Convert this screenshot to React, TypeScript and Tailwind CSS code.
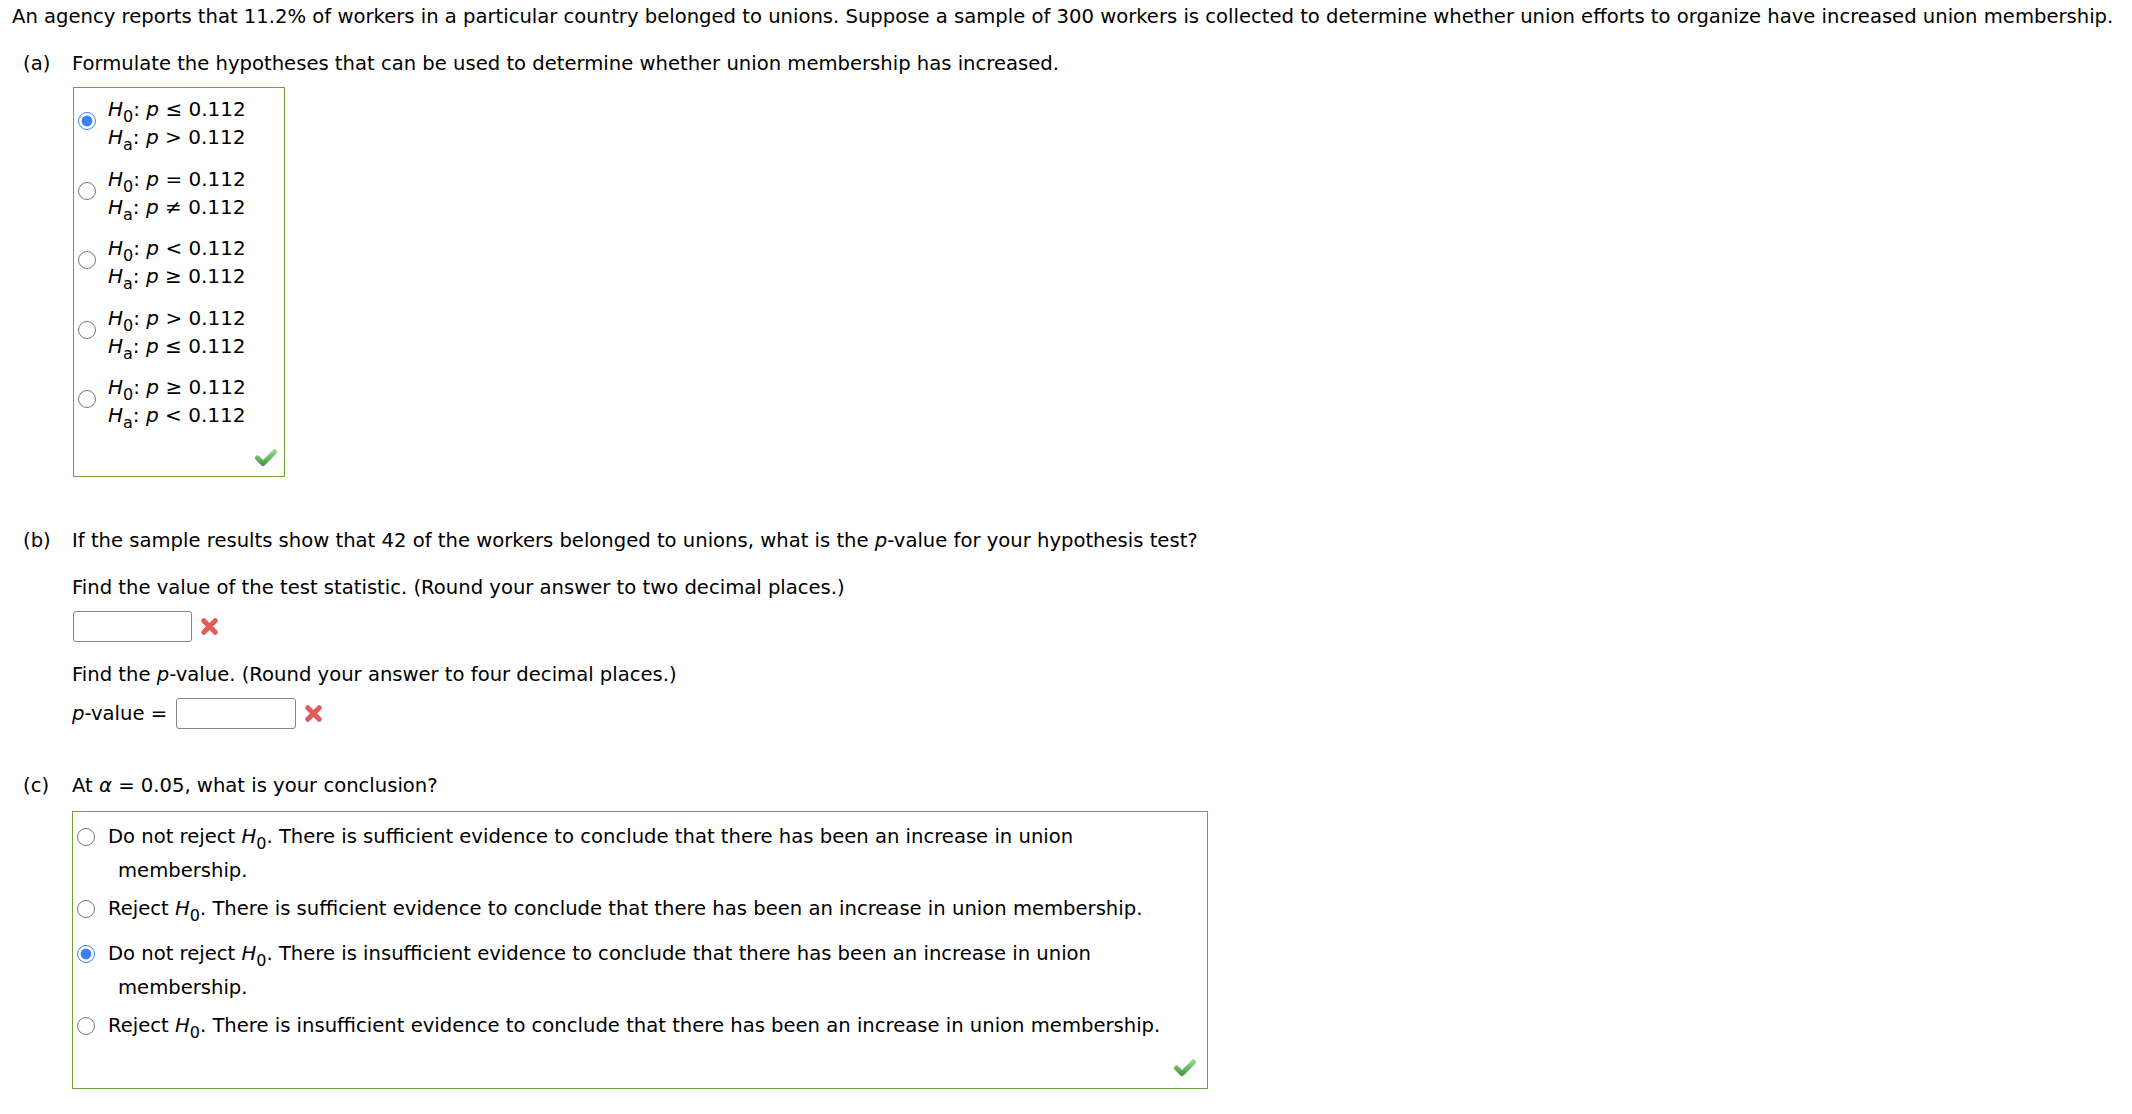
import React from 'react';

function Sub({ c }: { c: string }) {
    return <span className="not-italic text-[16px] leading-[0] relative top-[6px]">{c}</span>;
}

function H({ s }: { s: string }) {
    return (
        <>
            <i>H</i>
            <Sub c={s} />
        </>
    );
}

function Radio({ checked = false }: { checked?: boolean }) {
    return (
        <input
            type="radio"
            defaultChecked={checked}
            className="w-[18px] h-[18px] m-0 shrink-0 accent-[#3d80f4]"
        />
    );
}

function Check({ id }: { id: string }) {
    return (
        <svg width="24" height="19" viewBox="0 0 24 19">
            <defs>
                <linearGradient id={id} x1="0" y1="0" x2="0" y2="1">
                    <stop offset="0" stopColor="#8fd38a" />
                    <stop offset="1" stopColor="#4c9c48" />
                </linearGradient>
            </defs>
            <path d="M3.5 10 L9 15.5 L20.5 4" fill="none" stroke={`url(#${id})`} strokeWidth="5" strokeLinecap="round" strokeLinejoin="round" />
        </svg>
    );
}

function Cross() {
    return (
        <svg width="21" height="21" viewBox="0 0 20 20" className="shrink-0">
            <path d="M4.5 4.5 L15.5 15.5 M15.5 4.5 L4.5 15.5" stroke="#e25a5a" strokeWidth="4.8" strokeLinecap="round" />
        </svg>
    );
}

const hypotheses = [
    { h0: '≤', ha: '>', checked: true },
    { h0: '=', ha: '≠', checked: false },
    { h0: '<', ha: '≥', checked: false },
    { h0: '>', ha: '≤', checked: false },
    { h0: '≥', ha: '<', checked: false },
];

const conclusions = [
    { lead: 'Do not reject', rest: 'There is sufficient evidence to conclude that there has been an increase in union', wrap: 'membership.', checked: false, mt: 'mt-0' },
    { lead: 'Reject', rest: 'There is sufficient evidence to conclude that there has been an increase in union membership.', wrap: '', checked: false, mt: 'mt-[4px]' },
    { lead: 'Do not reject', rest: 'There is insufficient evidence to conclude that there has been an increase in union', wrap: 'membership.', checked: true, mt: 'mt-[11px]' },
    { lead: 'Reject', rest: 'There is insufficient evidence to conclude that there has been an increase in union membership.', wrap: '', checked: false, mt: 'mt-[4px]' },
];

export default function App() {
    return (
        <div className="min-h-screen bg-white text-black font-['DejaVu_Sans',sans-serif] text-[19.6px] pl-[12px] pt-[1px]">
            <p className="leading-[32px] whitespace-nowrap">
                An agency reports that 11.2% of workers in a particular country belonged to unions. Suppose a sample of 300 workers is collected to determine whether union efforts to organize have increased union membership.
            </p>

            {/* part a */}
            <div className="mt-[15px] flex leading-[32px]">
                <span className="w-[60px] pl-[11px]">(a)</span>
                <span>Formulate the hypotheses that can be used to determine whether union membership has increased.</span>
            </div>
            <div className="ml-[61px] mt-[7px] w-[212px] h-[390px] border border-[#70a044] flex flex-col pl-[4px] pt-[7px]">
                {hypotheses.map((h, i) => (
                    <div key={i} className={`flex items-center ${i > 0 ? 'mt-[13.5px]' : ''}`}>
                        <div className="mb-[4px] flex"><Radio checked={h.checked} /></div>
                        <div className="ml-[12px] leading-[28px] whitespace-nowrap text-[20px]">
                            <div><H s="0" />: <i>p</i> {h.h0} 0.112</div>
                            <div><H s="a" />: <i>p</i> {h.ha} 0.112</div>
                        </div>
                    </div>
                ))}
                <div className="mt-auto self-end mr-[6px] mb-[9px] flex"><Check id="chk-a" /></div>
            </div>

            {/* part b */}
            <div className="mt-[48px] flex leading-[32px]">
                <span className="w-[60px] pl-[11px]">(b)</span>
                <span>If the sample results show that 42 of the workers belonged to unions, what is the <i>p</i>-value for your hypothesis test?</span>
            </div>
            <div className="ml-[60px]">
                <p className="mt-[15px] leading-[32px]">Find the value of the test statistic. (Round your answer to two decimal places.)</p>
                <div className="mt-[7px] flex items-center">
                    <div className="ml-[1px] w-[119px] h-[31px] border border-[#858585] rounded-[3px]" />
                    <div className="ml-[7px] flex"><Cross /></div>
                </div>
                <p className="mt-[17px] leading-[32px]">Find the <i>p</i>-value. (Round your answer to four decimal places.)</p>
                <div className="mt-[7px] flex items-center">
                    <span><i>p</i>-value =</span>
                    <div className="ml-[9px] w-[120px] h-[31px] border border-[#858585] rounded-[3px]" />
                    <div className="ml-[7px] flex"><Cross /></div>
                </div>
            </div>

            {/* part c */}
            <div className="mt-[41px] flex leading-[32px]">
                <span className="w-[60px] pl-[11px]">(c)</span>
                <span>At <i>α</i> = 0.05, what is your conclusion?</span>
            </div>
            <div className="ml-[60px] mt-[9px] w-[1136px] h-[278px] border border-[#70a044] flex flex-col pl-[4px] pt-[8px]">
                {conclusions.map((c, i) => (
                    <div key={i} className={`flex items-start ${c.mt}`}>
                        <div className="h-[34px] flex items-center"><Radio checked={c.checked} /></div>
                        <div className="ml-[13px] leading-[34px] whitespace-nowrap">
                            <div>{c.lead} <H s="0" />. {c.rest}</div>
                            {c.wrap && <div className="pl-[10px]">{c.wrap}</div>}
                        </div>
                    </div>
                ))}
                <div className="mt-auto self-end mr-[10px] mb-[11px] flex"><Check id="chk-c" /></div>
            </div>
        </div>
    );
}
